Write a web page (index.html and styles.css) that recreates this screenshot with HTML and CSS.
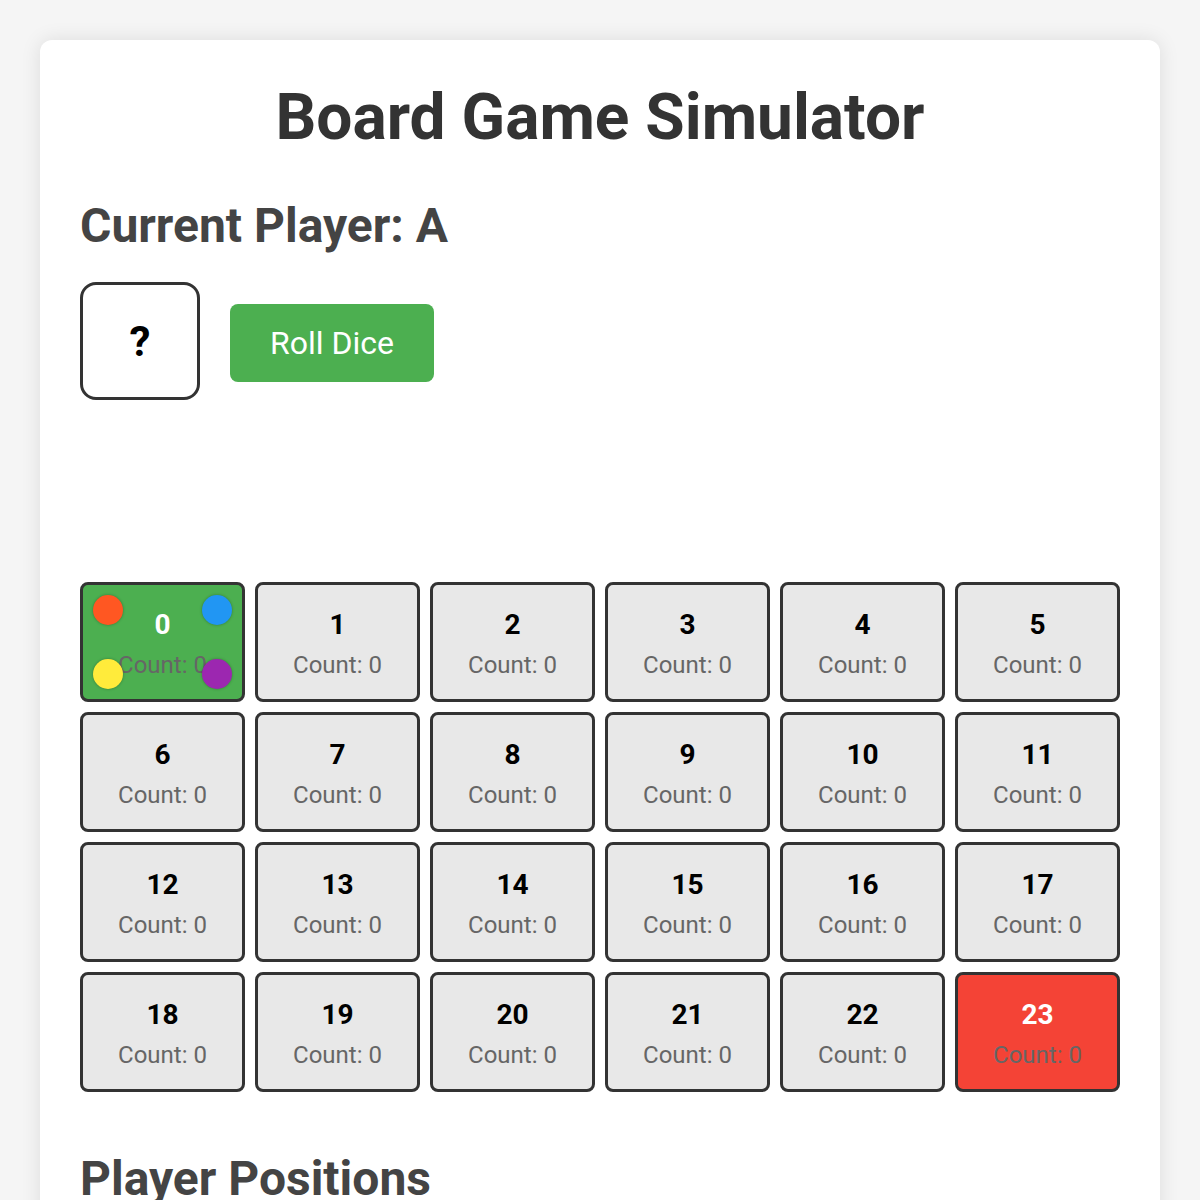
FILE: index.html
```html
<!DOCTYPE html>
<html>
<head>
<meta charset="utf-8">
<link rel="stylesheet" href="styles.css">
</head>
<body>
<div class="container">
  <h1 class="title">Board Game Simulator</h1>
  <h2 class="subtitle">Current Player: A</h2>
  <div class="controls">
    <div class="dice">?</div>
    <button class="roll">Roll Dice</button>
  </div>
  <div class="message"></div>
  <div class="board">
    <div class="cell start">
      <span class="token t-red"></span>
      <span class="token t-blue"></span>
      <span class="token t-yellow"></span>
      <span class="token t-purple"></span>
      <div class="num">0</div><div class="count">Count: 0</div>
    </div>
    <div class="cell"><div class="num">1</div><div class="count">Count: 0</div></div>
    <div class="cell"><div class="num">2</div><div class="count">Count: 0</div></div>
    <div class="cell"><div class="num">3</div><div class="count">Count: 0</div></div>
    <div class="cell"><div class="num">4</div><div class="count">Count: 0</div></div>
    <div class="cell"><div class="num">5</div><div class="count">Count: 0</div></div>
    <div class="cell"><div class="num">6</div><div class="count">Count: 0</div></div>
    <div class="cell"><div class="num">7</div><div class="count">Count: 0</div></div>
    <div class="cell"><div class="num">8</div><div class="count">Count: 0</div></div>
    <div class="cell"><div class="num">9</div><div class="count">Count: 0</div></div>
    <div class="cell"><div class="num">10</div><div class="count">Count: 0</div></div>
    <div class="cell"><div class="num">11</div><div class="count">Count: 0</div></div>
    <div class="cell"><div class="num">12</div><div class="count">Count: 0</div></div>
    <div class="cell"><div class="num">13</div><div class="count">Count: 0</div></div>
    <div class="cell"><div class="num">14</div><div class="count">Count: 0</div></div>
    <div class="cell"><div class="num">15</div><div class="count">Count: 0</div></div>
    <div class="cell"><div class="num">16</div><div class="count">Count: 0</div></div>
    <div class="cell"><div class="num">17</div><div class="count">Count: 0</div></div>
    <div class="cell"><div class="num">18</div><div class="count">Count: 0</div></div>
    <div class="cell"><div class="num">19</div><div class="count">Count: 0</div></div>
    <div class="cell"><div class="num">20</div><div class="count">Count: 0</div></div>
    <div class="cell"><div class="num">21</div><div class="count">Count: 0</div></div>
    <div class="cell"><div class="num">22</div><div class="count">Count: 0</div></div>
    <div class="cell end"><div class="num">23</div><div class="count">Count: 0</div></div>
  </div>
  <h2 class="subtitle positions">Player Positions</h2>
</div>
</body>
</html>
```
FILE: styles.css
```css
html, body {
  margin: 0;
  padding: 0;
}
body {
  background: #f5f5f5;
  font-family: Roboto, "Liberation Sans", Arial, sans-serif;
  padding: 40px;
}
.container {
  background: #fff;
  border-radius: 12px;
  box-shadow: 0 0 20px rgba(0, 0, 0, 0.1);
  padding: 40px;
  min-height: 1200px;
}
.title {
  margin: 0 0 42px;
  font-size: 64px;
  font-weight: 700;
  text-align: center;
  color: #333;
}
.subtitle {
  margin: 0 0 28px;
  font-size: 48px;
  font-weight: 700;
  color: #444;
}
.controls {
  display: flex;
  align-items: center;
  gap: 30px;
}
.dice {
  width: 120px;
  height: 118px;
  box-sizing: border-box;
  border: 3px solid #333;
  border-radius: 16px;
  display: flex;
  align-items: center;
  justify-content: center;
  font-size: 42px;
  font-weight: 700;
  color: #000;
}
.roll {
  background: #4caf50;
  color: #fff;
  border: none;
  border-radius: 8px;
  font-family: Roboto, "Liberation Sans", Arial, sans-serif;
  font-size: 32px;
  padding: 0 40px;
  width: 204px;
  height: 78px;
  margin-top: 3px;
}
.message {
  height: 182px;
}
.board {
  display: grid;
  grid-template-columns: repeat(6, 1fr);
  gap: 10px;
}
.cell {
  position: relative;
  height: 120px;
  box-sizing: border-box;
  border: 3px solid #333;
  border-radius: 8px;
  background: #e8e8e8;
  display: flex;
  flex-direction: column;
  align-items: center;
  justify-content: center;
  gap: 10px;
  padding-top: 2px;
}
.num {
  font-size: 28px;
  font-weight: 700;
  color: #000;
}
.count {
  font-size: 24px;
  color: #666;
}
.start {
  background: #4caf50;
}
.end {
  background: #f44336;
}
.start .num, .end .num {
  color: #fff;
}
.token {
  position: absolute;
  width: 30px;
  height: 30px;
  border-radius: 50%;
  box-shadow: 0 0 3px rgba(0, 0, 0, 0.3);
}
.t-red { background: #ff5722; top: 10px; left: 10px; }
.t-blue { background: #2196f3; top: 10px; right: 10px; }
.t-yellow { background: #ffeb3b; bottom: 10px; left: 10px; }
.t-purple { background: #9c27b0; bottom: 10px; right: 10px; }
.positions {
  margin-top: 58px;
}
```
